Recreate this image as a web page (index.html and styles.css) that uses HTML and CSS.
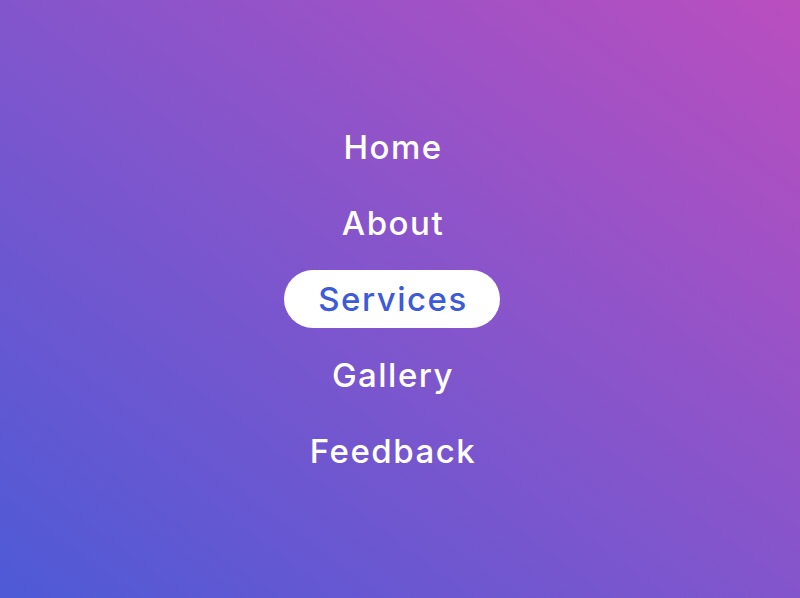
FILE: index.html
```html
<!DOCTYPE html>
<html lang="en">
<head>
<meta charset="utf-8">
<title>Menu</title>
<link rel="stylesheet" href="styles.css">
</head>
<body>
<nav class="menu">
  <ul class="menu-list">
    <li><a class="menu-link" href="#">Home</a></li>
    <li><a class="menu-link" href="#">About</a></li>
    <li><a class="menu-link active" href="#">Services</a></li>
    <li><a class="menu-link" href="#">Gallery</a></li>
    <li><a class="menu-link" href="#">Feedback</a></li>
  </ul>
</nav>
</body>
</html>
```

FILE: styles.css
```css
* { box-sizing: border-box; }
html, body { margin: 0; height: 100%; }
body {
  background: linear-gradient(to top right, #4e5ad6 0%, #8355cc 50%, #ba4ebf 100%);
  font-family: Inter, "Noto Sans", sans-serif;
  display: flex;
  align-items: center;
  justify-content: center;
  padding-right: 16px;
}
.menu-list {
  list-style: none;
  margin: 0;
  padding: 0;
  display: flex;
  flex-direction: column;
  align-items: center;
  gap: 18px;
}
.menu-link {
  display: block;
  color: #ffffff;
  text-decoration: none;
  font-size: 33px;
  font-weight: 500;
  letter-spacing: 1.5px;
  line-height: 58px;
  padding: 0 32px 0 34px;
  border-radius: 29px;
}
.menu-link.active {
  background: #ffffff;
  color: #3d5ad8;
}
```
